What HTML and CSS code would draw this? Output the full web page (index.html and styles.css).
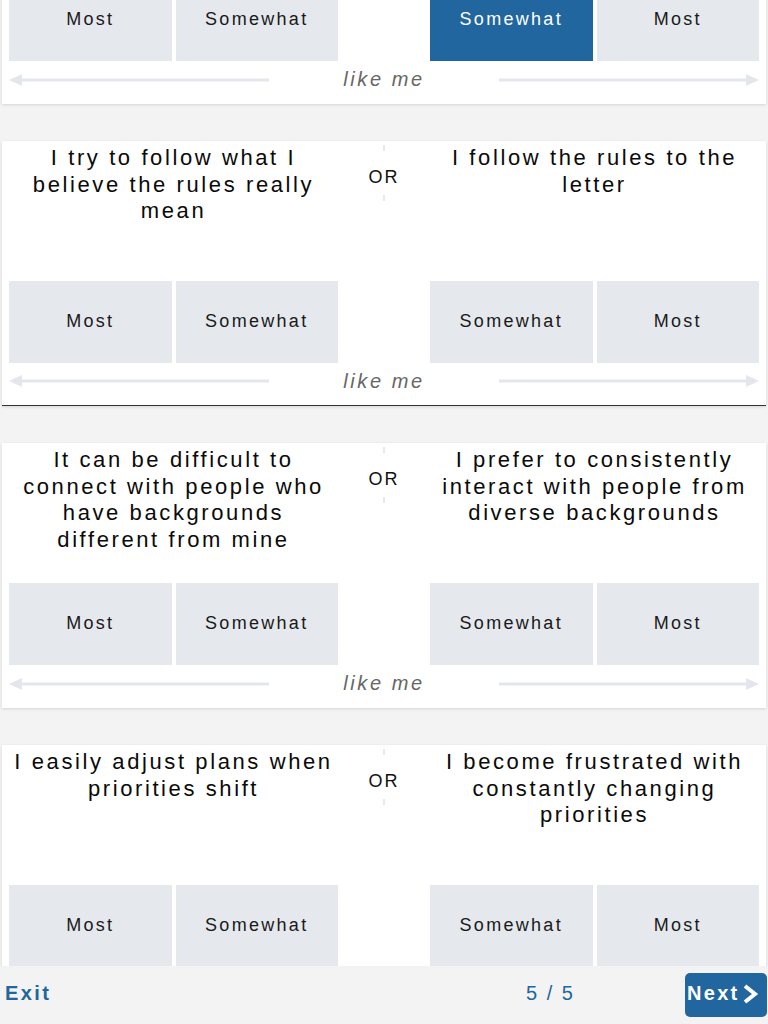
FILE: index.html
```html
<!DOCTYPE html>
<html lang="en">
<head>
    <meta charset="UTF-8">
    <meta name="viewport" content="width=device-width, initial-scale=1.0">
    <title>Work style survey</title>
    <link rel="stylesheet" href="styles.css">
</head>
<body>
    <div class="page">
        <div class="scroller">

            <!-- previous question, scrolled mostly out of view -->
            <div class="card partial">
                <div class="choices">
                    <div class="group">
                        <button class="choice">Most</button>
                        <button class="choice">Somewhat</button>
                    </div>
                    <div class="group">
                        <button class="choice selected">Somewhat</button>
                        <button class="choice">Most</button>
                    </div>
                </div>
                <div class="scale">
                    <svg class="arrow" width="260" height="14" viewBox="0 0 260 14"><polygon points="0,7 13,1 13,13" /><rect x="12" y="5.5" width="248" height="3" /></svg>
                    <span class="scale-label">like me</span>
                    <svg class="arrow" width="260" height="14" viewBox="0 0 260 14"><rect x="0" y="5.5" width="248" height="3" /><polygon points="260,7 247,1 247,13" /></svg>
                </div>
            </div>

            <div class="card current">
                <div class="pair">
                    <div class="statement">I try to follow what I believe the rules really mean</div>
                    <div class="or"><span class="tick"></span><span class="or-text">OR</span><span class="tick"></span></div>
                    <div class="statement">I follow the rules to the letter</div>
                </div>
                <div class="choices">
                    <div class="group">
                        <button class="choice">Most</button>
                        <button class="choice">Somewhat</button>
                    </div>
                    <div class="group">
                        <button class="choice">Somewhat</button>
                        <button class="choice">Most</button>
                    </div>
                </div>
                <div class="scale">
                    <svg class="arrow" width="260" height="14" viewBox="0 0 260 14"><polygon points="0,7 13,1 13,13" /><rect x="12" y="5.5" width="248" height="3" /></svg>
                    <span class="scale-label">like me</span>
                    <svg class="arrow" width="260" height="14" viewBox="0 0 260 14"><rect x="0" y="5.5" width="248" height="3" /><polygon points="260,7 247,1 247,13" /></svg>
                </div>
            </div>

            <div class="card">
                <div class="pair">
                    <div class="statement">It can be difficult to connect with people who have backgrounds different from mine</div>
                    <div class="or"><span class="tick"></span><span class="or-text">OR</span><span class="tick"></span></div>
                    <div class="statement">I prefer to consistently interact with people from diverse backgrounds</div>
                </div>
                <div class="choices">
                    <div class="group">
                        <button class="choice">Most</button>
                        <button class="choice">Somewhat</button>
                    </div>
                    <div class="group">
                        <button class="choice">Somewhat</button>
                        <button class="choice">Most</button>
                    </div>
                </div>
                <div class="scale">
                    <svg class="arrow" width="260" height="14" viewBox="0 0 260 14"><polygon points="0,7 13,1 13,13" /><rect x="12" y="5.5" width="248" height="3" /></svg>
                    <span class="scale-label">like me</span>
                    <svg class="arrow" width="260" height="14" viewBox="0 0 260 14"><rect x="0" y="5.5" width="248" height="3" /><polygon points="260,7 247,1 247,13" /></svg>
                </div>
            </div>

            <div class="card">
                <div class="pair">
                    <div class="statement">I easily adjust plans when priorities shift</div>
                    <div class="or"><span class="tick"></span><span class="or-text">OR</span><span class="tick"></span></div>
                    <div class="statement">I become frustrated with constantly changing priorities</div>
                </div>
                <div class="choices">
                    <div class="group">
                        <button class="choice">Most</button>
                        <button class="choice">Somewhat</button>
                    </div>
                    <div class="group">
                        <button class="choice">Somewhat</button>
                        <button class="choice">Most</button>
                    </div>
                </div>
                <div class="scale">
                    <svg class="arrow" width="260" height="14" viewBox="0 0 260 14"><polygon points="0,7 13,1 13,13" /><rect x="12" y="5.5" width="248" height="3" /></svg>
                    <span class="scale-label">like me</span>
                    <svg class="arrow" width="260" height="14" viewBox="0 0 260 14"><rect x="0" y="5.5" width="248" height="3" /><polygon points="260,7 247,1 247,13" /></svg>
                </div>
            </div>

        </div>

        <div class="footer">
            <a class="exit" href="#">Exit</a>
            <span class="progress">5 / 5</span>
            <button class="next">Next <svg width="20" height="22" viewBox="0 0 20 22"><polyline points="5,3 15,11 5,19" /></svg></button>
        </div>
    </div>
</body>
</html>
```

FILE: styles.css
```css
body {
    margin: 0;
    background-color: #f3f3f3;
    font-family: "Liberation Sans", Arial, sans-serif;
    color: #111;
}
.page {
    height: 1024px;
    display: flex;
    flex-direction: column;
}
.scroller {
    flex: 1;
    overflow: hidden;
}
.card {
    background-color: #fff;
    margin: 0 2px 37px 2px;
    height: 265px;
    box-sizing: border-box;
    box-shadow: 0 1px 3px rgba(0, 0, 0, 0.12);
    display: flex;
    flex-direction: column;
}
.card.partial {
    height: 125px;
    margin-top: -21px;
}
.card.current {
    border-bottom: 1px solid #333;
}
.pair {
    height: 140px;
    display: flex;
    padding: 0 7px;
}
.statement {
    width: 329px;
    padding-top: 4px;
    text-align: center;
    font-size: 22px;
    line-height: 26.5px;
    letter-spacing: 2.6px;
    color: #0a0a0a;
}
.or {
    flex: 1;
    display: flex;
    flex-direction: column;
    align-items: center;
    padding-top: 4px;
}
.tick {
    width: 2px;
    height: 6px;
    background-color: #e6e9ee;
}
.or-text {
    font-size: 18px;
    letter-spacing: 2px;
    line-height: 20px;
    margin: 16px 0 8px 0;
    color: #111;
}
.choices {
    display: flex;
    justify-content: space-between;
    padding: 0 7px;
}
.group {
    display: flex;
    gap: 4px;
    width: 329px;
}
.choice {
    flex: 1;
    height: 82px;
    border: none;
    background-color: #e5e8ed;
    font-family: "Liberation Sans", Arial, sans-serif;
    font-size: 18px;
    letter-spacing: 2.3px;
    color: #1a1a1a;
    padding: 0 0 2px 0;
    cursor: pointer;
}
.choice.selected {
    background-color: #21669e;
    color: #fff;
}
.scale {
    flex: 1;
    display: flex;
    align-items: center;
    padding: 0 7px 6px 7px;
}
.arrow {
    fill: #e3e7ed;
    flex-shrink: 0;
}
.scale-label {
    flex: 1;
    text-align: center;
    font-size: 20px;
    font-style: italic;
    letter-spacing: 2.6px;
    color: #666;
}
.footer {
    height: 58px;
    display: flex;
    align-items: center;
    background-color: #f3f3f3;
}
.exit {
    margin-left: 5px;
    margin-bottom: 3px;
    color: #21669e;
    font-size: 20px;
    font-weight: bold;
    letter-spacing: 2.4px;
    text-decoration: none;
}
.progress {
    margin-left: auto;
    margin-right: 110px;
    margin-bottom: 3px;
    color: #21669e;
    font-size: 20px;
    letter-spacing: 2px;
}
.next {
    height: 44px;
    width: 82px;
    margin-right: 1px;
    border: none;
    border-radius: 5px;
    background-color: #21669e;
    color: #fff;
    font-family: "Liberation Sans", Arial, sans-serif;
    font-size: 20px;
    font-weight: bold;
    letter-spacing: 2.3px;
    display: flex;
    align-items: center;
    padding: 0 0 3px 2px;
    gap: 0;
}
.next svg {
    fill: none;
    stroke: #fff;
    stroke-width: 4;
}
```
